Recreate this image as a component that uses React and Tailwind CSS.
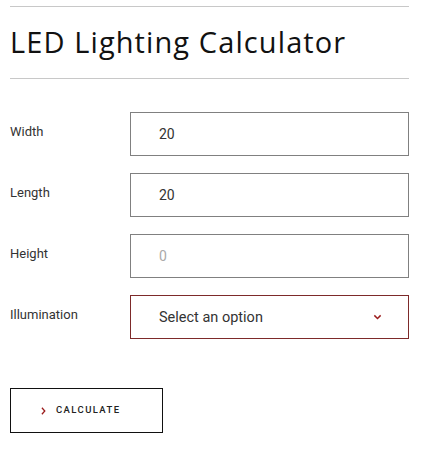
import React from "react";

const fields = [
  { label: "Width", value: "20" },
  { label: "Length", value: "20" },
  { label: "Height", value: "", placeholder: "0" },
];

function Chevron({ className }) {
  return (
    <svg viewBox="0 0 10 6" className={className} fill="none" stroke="currentColor" strokeWidth="1.6">
      <path d="M1.5 1.2 5 4.6 8.5 1.2" />
    </svg>
  );
}

export default function App() {
  return (
    <div className="w-[433px] h-[452px] bg-white font-['Roboto',sans-serif]">
      <div className="ml-[10px] w-[399px] pt-[6px]">
        <div className="border-t border-[#c8c8c8]" />
        {/* title */}
        <h1 className="font-['Open_Sans',sans-serif] text-[29px] leading-[40px] text-[#111] pt-[15px] pb-[16px] tracking-[1.1px]">
          LED Lighting Calculator
        </h1>
        <div className="border-t border-[#c8c8c8]" />

        {/* fields */}
        <div className="mt-[33px] flex flex-col gap-[17px]">
          {fields.map((f) => (
            <div key={f.label} className="flex items-start">
              <label className="w-[120px] pt-[10px] text-[13px] leading-[20px] text-[#333]">
                {f.label}
              </label>
              <input
                type="text"
                defaultValue={f.value}
                placeholder={f.placeholder}
                className="w-[279px] h-[44px] border border-[#808080] pl-[28px] text-[14px] text-[#333] placeholder:text-[#aaa] outline-none"
              />
            </div>
          ))}
          <div className="flex items-start">
            <label className="w-[120px] pt-[10px] text-[13px] leading-[20px] text-[#333]">
              Illumination
            </label>
            <div className="w-[279px] h-[44px] border border-[#7d2a2a] pl-[28px] pr-[26px] flex items-center justify-between text-[14.5px] text-[#333]">
              <span className="pt-[1px]">Select an option</span>
              <Chevron className="w-[9px] h-[6px] text-[#9b1c1c]" />
            </div>
          </div>
        </div>

        {/* actions */}
        <button className="mt-[49px] w-[153px] h-[45px] border border-[#111] flex items-center pl-[30px] gap-[10px]">
          <svg viewBox="0 0 6 10" className="w-[5px] h-[8px] text-[#9b1c1c]" fill="none" stroke="currentColor" strokeWidth="1.6">
            <path d="M1 1 4.6 5 1 9" />
          </svg>
          <span className="text-[9.5px] font-medium tracking-[1.4px] text-[#222]">CALCULATE</span>
        </button>
      </div>
    </div>
  );
}
